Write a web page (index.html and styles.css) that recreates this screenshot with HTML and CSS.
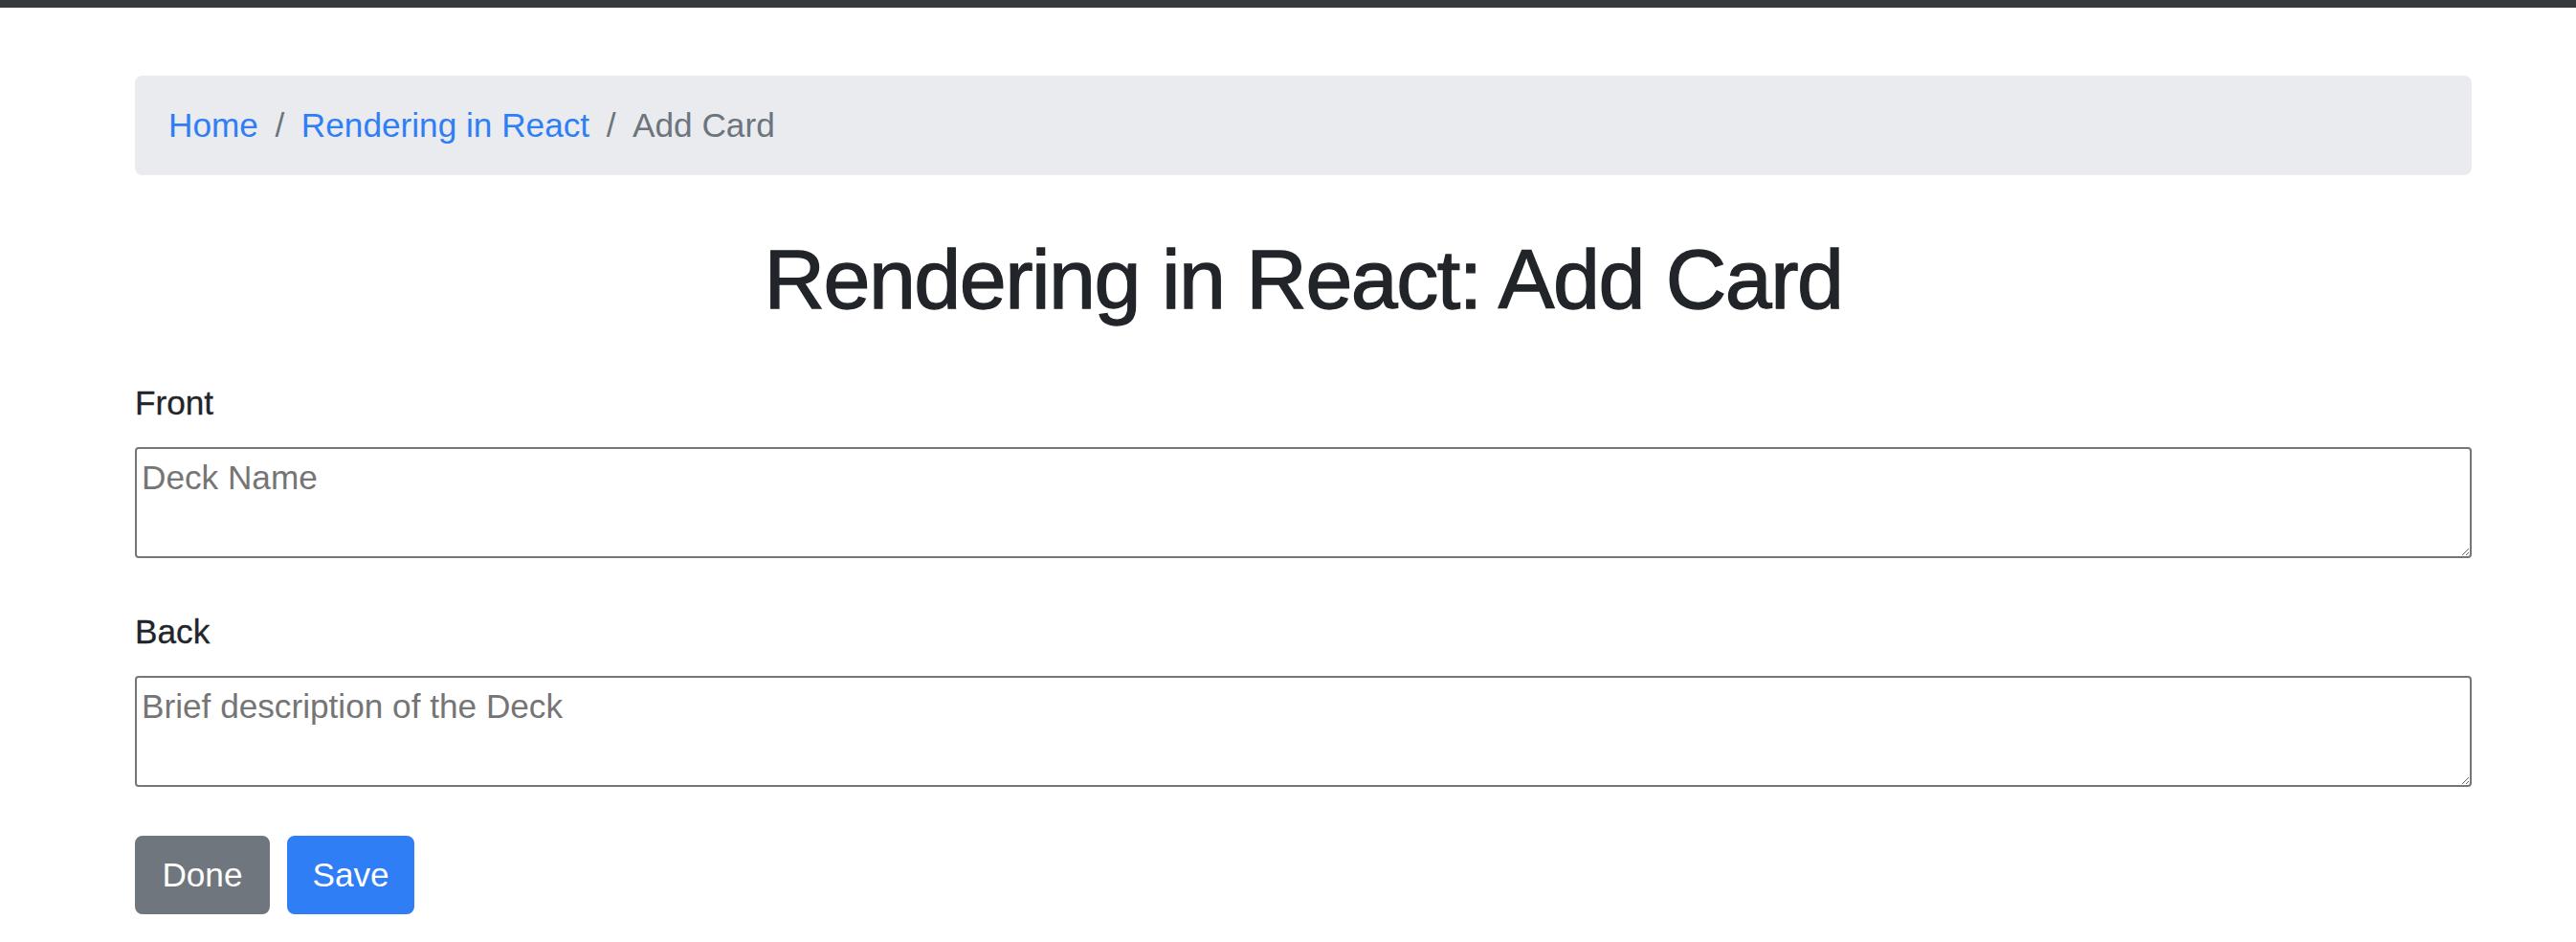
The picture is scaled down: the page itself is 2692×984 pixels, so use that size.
FILE: index.html
```html
<!DOCTYPE html>
<html lang="en">
<head>
<meta charset="utf-8">
<title>Rendering in React: Add Card</title>
<link rel="stylesheet" href="styles.css">
</head>
<body>
<div class="topbar"></div>
<main class="container">
  <nav class="breadcrumb" aria-label="breadcrumb">
    <a class="crumb-link" href="#">Home</a>
    <span class="sep">/</span>
    <a class="crumb-link" href="#">Rendering in React</a>
    <span class="sep">/</span>
    <span class="crumb-active">Add Card</span>
  </nav>
  <h1 class="title">Rendering in React: Add Card</h1>
  <form class="card-form">
    <div class="form-group">
      <label class="label" for="front">Front</label>
      <textarea class="field" id="front" placeholder="Deck Name"></textarea>
    </div>
    <div class="form-group">
      <label class="label" for="back">Back</label>
      <textarea class="field" id="back" placeholder="Brief description of the Deck"></textarea>
    </div>
    <div class="actions">
      <button type="button" class="btn btn-secondary">Done</button>
      <button type="submit" class="btn btn-primary">Save</button>
    </div>
  </form>
</main>
</body>
</html>
```
FILE: styles.css
```css
* { box-sizing: border-box; }

html, body {
  margin: 0;
  padding: 0;
  background: #ffffff;
}

body {
  font-family: "Liberation Sans", Arial, Helvetica, sans-serif;
  font-size: 35.2px;
  line-height: 52px;
  color: #212529;
}

.topbar {
  height: 8px;
  background: #363a3f;
}

.container {
  margin: 0 109px 0 141px;
}

.breadcrumb {
  margin-top: 71px;
  height: 104px;
  padding: 26px 35px;
  background: #e9ebee;
  border-radius: 8px;
  display: flex;
  align-items: center;
}

.crumb-link {
  color: #2f7ef6;
  text-decoration: none;
}

.sep {
  color: #6c757d;
  padding: 0 17.6px;
}

.crumb-active {
  color: #6c757d;
}

.title {
  margin: 56px 0 51px;
  font-size: 88px;
  line-height: 105px;
  font-weight: 400;
  letter-spacing: -1.5px;
  text-align: center;
  color: #212529;
  -webkit-text-stroke: 1.3px #212529;
}

.card-form {
  display: flex;
  flex-direction: column;
}

.form-group {
  display: flex;
  flex-direction: column;
  margin-bottom: 51px;
}

.label {
  display: block;
  margin-bottom: 20px;
  color: #212529;
  -webkit-text-stroke: 0.3px #212529;
}

.field {
  display: block;
  width: 100%;
  height: 116px;
  margin: 0;
  padding: 4.4px 5px;
  font: inherit;
  line-height: 52.8px;
  color: #212529;
  border: 2px solid #767676;
  border-radius: 4px;
  background: #ffffff;
  resize: vertical;
}

.field::placeholder {
  color: #757575;
}

.form-group:last-of-type {
  margin-bottom: 50px;
}

.actions {
  display: flex;
  gap: 18px;
}

.btn {
  font: inherit;
  line-height: 52.8px;
  padding: 12.5px 26.4px;
  border: 2px solid transparent;
  border-radius: 8px;
  color: #ffffff;
  cursor: pointer;
}

.btn-secondary {
  background: #6f767d;
  border-color: #6f767d;
}

.btn-primary {
  padding: 12.5px 24.5px;
  background: #2f7ef6;
  border-color: #2f7ef6;
}
```
